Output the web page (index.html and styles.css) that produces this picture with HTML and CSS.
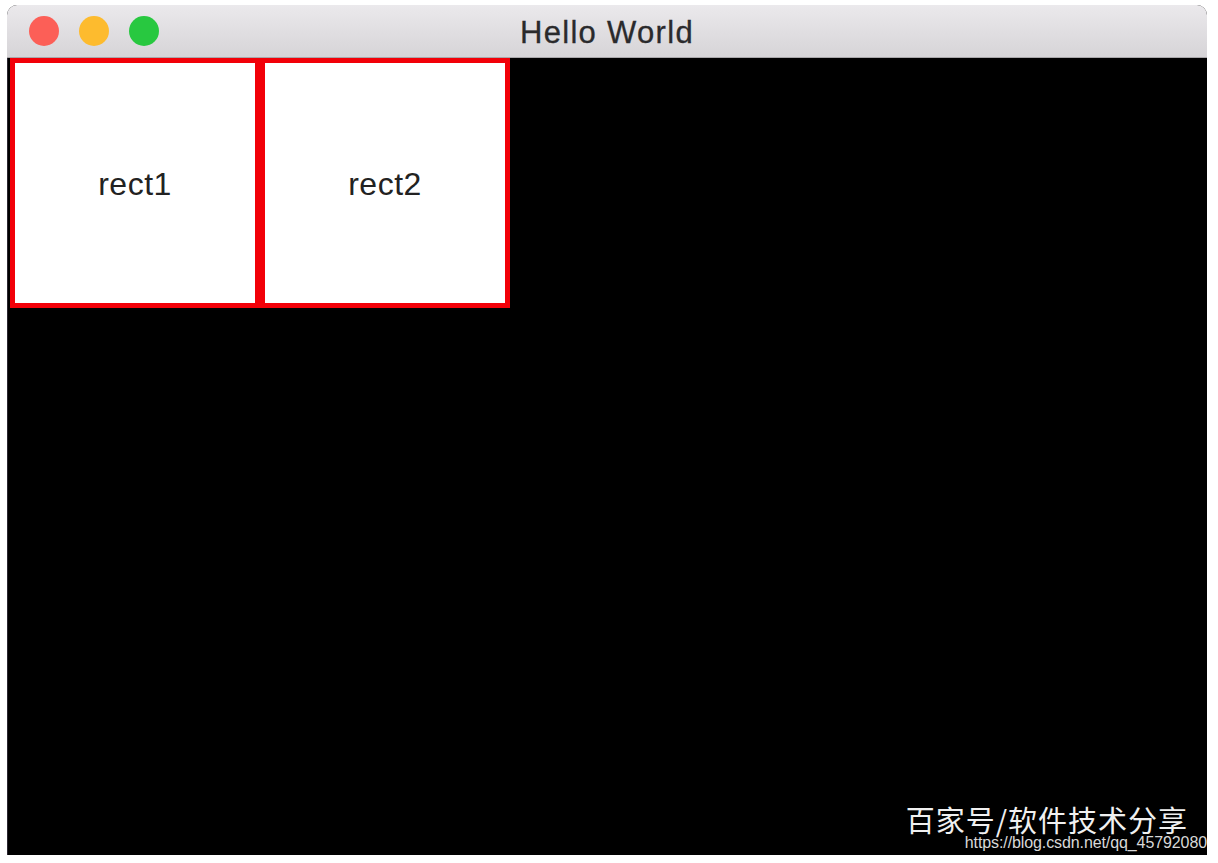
FILE: index.html
```html
<!DOCTYPE html>
<html lang="zh-CN">
<head>
  <meta charset="UTF-8" />
  <title>Hello World</title>
  <link rel="stylesheet" href="styles.css">
</head>
<body>
  <div class="window">
    <div class="titlebar">
      <div class="lights">
        <span class="light red"></span>
        <span class="light yellow"></span>
        <span class="light green"></span>
      </div>
      <div class="title">Hello World</div>
      <div></div>
    </div>
    <div class="content">
      <div class="rect">rect1</div>
      <div class="rect">rect2</div>
    </div>
    <div class="watermark">
      <div class="wm-cn">百家号/软件技术分享</div>
      <div class="wm-url">https://blog.csdn.net/qq_45792080</div>
    </div>
  </div>
</body>
</html>
```

FILE: styles.css
```css
body {
  margin: 0;
  background: #fff;
  font-family: 'Liberation Sans', Arial, sans-serif;
}
.window {
  position: relative;
  margin: 5px 0 0 7px;
  width: 1200px;
  height: 850px;
  border-radius: 10px 10px 0 0;
  overflow: hidden;
  display: flex;
  flex-direction: column;
  background: #000;
}
.titlebar {
  height: 52px;
  flex-shrink: 0;
  display: grid;
  grid-template-columns: 1fr auto 1fr;
  align-items: center;
  background: linear-gradient(#ebe9ec, #d6d4d7);
  border-bottom: 1px solid #a9a7aa;
}
.lights {
  display: flex;
  gap: 20px;
  padding-left: 22px;
}
.light {
  width: 30px;
  height: 30px;
  border-radius: 50%;
}
.red { background: #fc5f57; }
.yellow { background: #fdbb2e; }
.green { background: #28c840; }
.title {
  font-size: 31px;
  letter-spacing: 1.3px;
  color: #2a2a2c;
  padding-top: 3px;
  -webkit-text-stroke: 0.3px #2a2a2c;
}
.content {
  flex: 1;
  display: flex;
  align-items: flex-start;
  padding-left: 2px;
  border-left: 1px solid #2a2630;
}
.rect {
  width: 250px;
  height: 250px;
  box-sizing: border-box;
  border: 5px solid #f20008;
  background: #fff;
  display: flex;
  align-items: center;
  justify-content: center;
  font-size: 32px;
  letter-spacing: 0.5px;
  color: #222;
  padding-top: 2px;
}
.watermark {
  position: absolute;
  right: 0;
  bottom: 3px;
  display: flex;
  flex-direction: column;
  align-items: flex-end;
}
.wm-cn {
  font-family: 'Noto Sans CJK SC', sans-serif;
  font-size: 29px;
  line-height: 30px;
  color: #f0f0f0;
  margin-right: 19px;
  letter-spacing: 1px;
}
.wm-url {
  font-size: 16px;
  line-height: 18px;
  color: #d8d8d8;
  letter-spacing: -0.1px;
}
```
